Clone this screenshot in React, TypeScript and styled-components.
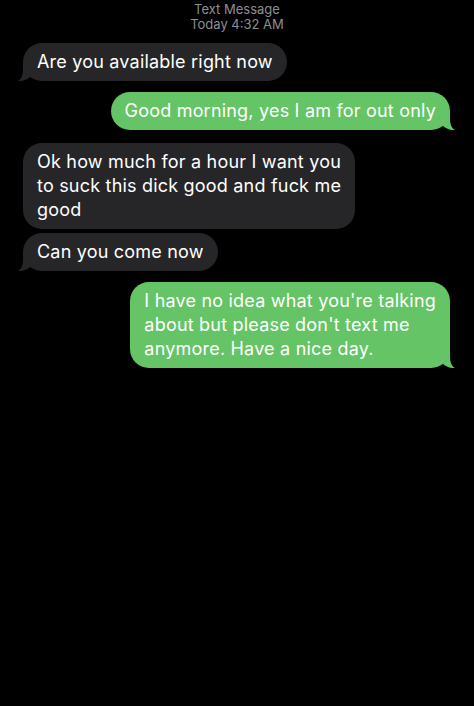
import styled, { createGlobalStyle } from "styled-components";

const GlobalStyle = createGlobalStyle`
    html, body {
        margin: 0;
        padding: 0;
        background: #000000;
    }
`;

type Side = "in" | "out";

const Tail = ({ side }: { side: Side }) => (
    <TailSvg $side={side} width="16" height="20" viewBox="0 0 16 20">
        <path d="M5 0 L5 8 C5 14 3.5 18 0 20 C5 20.5 9 18.5 12 16 L16 16 L16 0 Z" />
    </TailSvg>
);

export default function App() {
    return (
        <Screen>
            <GlobalStyle />
            <Header>
                <span>Text Message</span>
                <span>Today 4:32 AM</span>
            </Header>
            <Thread>
                <Bubble $side="in" $gap={0}>
                    <Line>Are you available right now</Line>
                    <Tail side="in" />
                </Bubble>
                <Bubble $side="out" $gap={11}>
                    <Line>Good morning, yes I am for out only</Line>
                    <Tail side="out" />
                </Bubble>
                <Bubble $side="in" $gap={13}>
                    <Line>Ok how much for a hour I want you</Line>
                    <Line>to suck this dick good and fuck me</Line>
                    <Line>good</Line>
                </Bubble>
                <Bubble $side="in" $gap={4}>
                    <Line>Can you come now</Line>
                    <Tail side="in" />
                </Bubble>
                <Bubble $side="out" $gap={11}>
                    <Line>I have no idea what you're talking</Line>
                    <Line>about but please don't text me</Line>
                    <Line>anymore. Have a nice day.</Line>
                    <Tail side="out" />
                </Bubble>
            </Thread>
        </Screen>
    );
}

const Screen = styled.div`
    min-height: 706px;
    background: #000000;
    font-family: Inter, "Noto Sans", sans-serif;
    padding-top: 2px;
    box-sizing: border-box;
`;

const Header = styled.div`
    display: flex;
    flex-direction: column;
    align-items: center;
    color: #8e8e93;
    font-size: 13px;
    line-height: 15px;
`;

const Thread = styled.div`
    display: flex;
    flex-direction: column;
    padding: 11px 24px 0 23px;
`;

const Bubble = styled.div<{ $side: Side; $gap: number }>`
    position: relative;
    align-self: ${(p) => (p.$side === "in" ? "flex-start" : "flex-end")};
    margin-top: ${(p) => p.$gap}px;
    padding: 7px 14px;
    border-radius: 19px;
    background: ${(p) => (p.$side === "in" ? "#262628" : "#65c466")};
    color: #ffffff;
    font-size: 18px;
    letter-spacing: 0.2px;
    line-height: 24px;
    fill: ${(p) => (p.$side === "in" ? "#262628" : "#65c466")};
`;

const Line = styled.div`
    position: relative;
    z-index: 1;
    white-space: nowrap;
`;

const TailSvg = styled.svg<{ $side: Side }>`
    position: absolute;
    bottom: 0;
    ${(p) => (p.$side === "in" ? "left: -5px;" : "right: -5px; transform: scaleX(-1);")}
`;
